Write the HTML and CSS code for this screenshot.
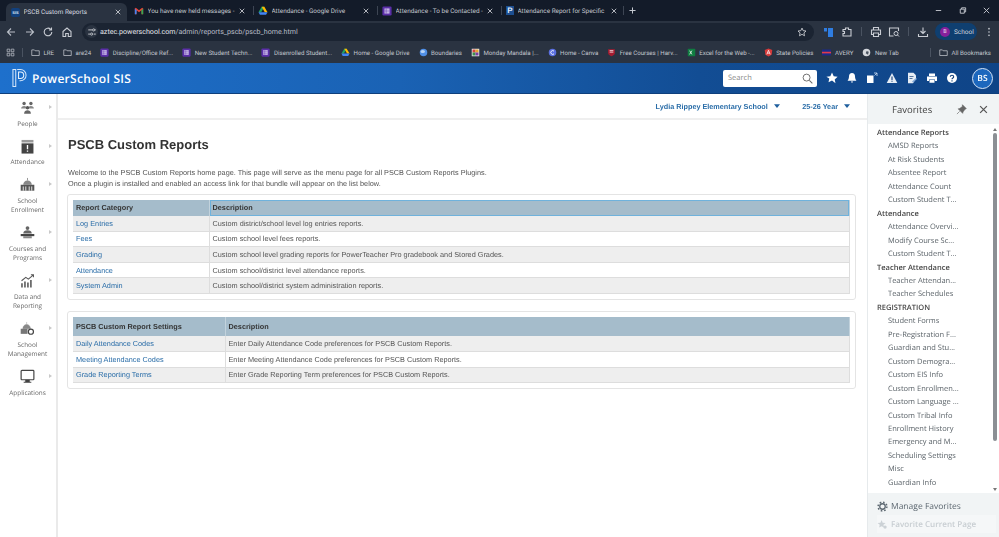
FILE: index.html
```html
<!DOCTYPE html>
<html lang="en">
<head>
<meta charset="utf-8">
<title>PSCB Custom Reports</title>
<link rel="stylesheet" href="styles.css">
</head>
<body>
<svg class="defs" width="0" height="0" aria-hidden="true">
  <symbol id="folder" viewBox="0 0 12 12"><path d="M1 2.5h3.500l1 1.200H11v6.300H1z" fill="none" stroke="currentColor" stroke-width="1"/></symbol>
  <symbol id="sheet" viewBox="0 0 12 12"><rect x="0.500" y="0.500" width="11" height="11" rx="1.500" fill="#5b2fa8"/><rect x="3" y="3" width="6" height="6" fill="#d9cff0"/><path d="M3 5h6M3 7h6M5 3v6" stroke="#5b2fa8" stroke-width=".6"/></symbol>
  <symbol id="drive" viewBox="0 0 12 12"><path d="M4.400 1h3.200l-3.700 6.400H.6z" fill="#1fa463"/><path d="M7.600 1l3.800 6.400H8.100L4.400 1z" fill="#ffba00"/><path d="M.6 7.400h10.800L9.700 10.600H2.300z" fill="#4285f4"/></symbol>
  <symbol id="close" viewBox="0 0 8 8"><path d="M1 1l6 6M7 1L1 7" stroke="currentColor" stroke-width="1.100" fill="none"/></symbol>
  <symbol id="caret" viewBox="0 0 8 5"><path d="M0 0h8L4 5z" fill="currentColor"/></symbol>
</svg>

<div class="tabstrip">
  <div class="tab active"><span class="fav-sis">SIS</span><span class="tab-title">PSCB Custom Reports</span><svg class="tab-x"><use href="#close"/></svg></div>
  <div class="tab"><svg class="fav" viewBox="0 0 12 12"><path d="M1 3v7h2V5.200L6 7.600l3-2.400V10h2V3L9.800 2 6 5 2.200 2z" fill="#ea4335"/><path d="M1 3v7h2V5.200z" fill="#4285f4"/><path d="M11 3v7H9V5.200z" fill="#34a853"/></svg><span class="tab-title">You have new held messages -</span><svg class="tab-x"><use href="#close"/></svg></div>
  <span class="tab-sep"></span>
  <div class="tab"><svg class="fav"><use href="#drive"/></svg><span class="tab-title">Attendance - Google Drive</span><svg class="tab-x"><use href="#close"/></svg></div>
  <span class="tab-sep"></span>
  <div class="tab"><svg class="fav"><use href="#sheet"/></svg><span class="tab-title">Attendance - To be Contacted -</span><svg class="tab-x"><use href="#close"/></svg></div>
  <span class="tab-sep"></span>
  <div class="tab"><span class="fav-p">P</span><span class="tab-title">Attendance Report for Specific</span><svg class="tab-x"><use href="#close"/></svg></div>
  <span class="tab-sep last"></span>
  <svg class="new-tab" viewBox="0 0 8 8"><path d="M4 .5v7M.5 4h7" stroke="#c9cdd4" stroke-width="1.100"/></svg>
  <div class="win-controls">
    <svg viewBox="0 0 10 10"><path d="M2 5h6" stroke="#c9cdd4"/></svg>
    <svg viewBox="0 0 10 10"><path d="M2.500 3.500h4.500v4.500h-4.500zM4 3.500V2h4.500v4.500H7" fill="none" stroke="#c9cdd4"/></svg>
    <svg viewBox="0 0 10 10"><path d="M2 2l6 6M8 2L2 8" stroke="#c9cdd4"/></svg>
  </div>
</div>

<div class="toolbar">
  <svg class="tb-ic" viewBox="0 0 12 12"><path d="M10 6H2.500M6 2.500L2.500 6 6 9.500" fill="none" stroke="#b9bec7" stroke-width="1.100"/></svg>
  <svg class="tb-ic" viewBox="0 0 12 12"><path d="M2 6h7.500M6 2.500L9.500 6 6 9.500" fill="none" stroke="#b9bec7" stroke-width="1.100"/></svg>
  <svg class="tb-ic" viewBox="0 0 12 12"><path d="M9.800 6A3.800 3.800 0 1 1 8.700 3.300M9.500 1.500v2.500H7" fill="none" stroke="#c9cdd4" stroke-width="1.100"/></svg>
  <svg class="tb-ic" viewBox="0 0 12 12"><path d="M2 5.500L6 2l4 3.500V10.500H7.300V7.500H4.700v3H2z" fill="none" stroke="#c9cdd4" stroke-width="1.100"/></svg>
  <div class="omnibox">
    <span class="tune"><svg viewBox="0 0 12 12"><path d="M1.500 3.500h5M1.500 8.500h2M8 8.500h2.500M9.500 3.500h1" stroke="#d2d5da" stroke-width="1.100"/><circle cx="8" cy="3.500" r="1.300" fill="none" stroke="#d2d5da"/><circle cx="5.500" cy="8.500" r="1.300" fill="none" stroke="#d2d5da"/></svg></span>
    <span class="url"><b>aztec.powerschool.com</b>/admin/reports_pscb/pscb_home.html</span>
    <svg class="omni-star" viewBox="0 0 12 12"><path d="M6 1.300l1.400 3.100 3.400.4-2.500 2.300.7 3.400L6 8.800l-3 1.700.7-3.400L1.200 4.800l3.400-.4z" fill="none" stroke="#d2d5da" stroke-width="1"/></svg>
  </div>
  <div class="ext">
    <svg class="tb-ic" viewBox="0 0 12 12"><rect x="1" y="2" width="3" height="3.500" fill="#2f7de1"/><rect x="5" y="2" width="5" height="9" fill="#2f7de1"/></svg>
    <svg class="tb-ic" viewBox="0 0 12 12"><path d="M2 3.500h2.500V2h3v1.500H10V10H2V7.500h1.500v-2H2z" fill="none" stroke="#c9cdd4" stroke-width="1.100"/></svg>
    <span class="tb-sep"></span>
    <svg class="tb-ic" viewBox="0 0 12 12"><path d="M3.500 4V1.500h5V4M3 8.500H1.500V4h9v4.500H9M3.500 7h5v3.500h-5z" fill="none" stroke="#c9cdd4" stroke-width="1.100"/></svg>
    <svg class="tb-ic" viewBox="0 0 12 12"><path d="M10.500 5V2h-9v8h4" fill="none" stroke="#c9cdd4" stroke-width="1.100"/><circle cx="8" cy="7.500" r="2" fill="none" stroke="#c9cdd4"/><path d="M9.500 9l1.500 1.500" stroke="#c9cdd4"/></svg>
    <span class="tb-sep"></span>
    <svg class="tb-ic" viewBox="0 0 12 12"><path d="M6 1.500v6M3.500 5L6 7.500 8.500 5M1.500 8v2.500h9V8" fill="none" stroke="#c9cdd4" stroke-width="1.100"/></svg>
    <div class="profile"><span class="avatar">B</span><span>School</span></div>
    <svg class="kebab" viewBox="0 0 4 12"><circle cx="2" cy="2" r="1" fill="#c9cdd4"/><circle cx="2" cy="6" r="1" fill="#c9cdd4"/><circle cx="2" cy="10" r="1" fill="#c9cdd4"/></svg>
  </div>
</div>

<div class="bookmarks">
  <svg class="bm-apps" viewBox="0 0 12 12"><path d="M1.500 1.500h3.500v3.500H1.500zM7 1.500h3.500v3.500H7zM1.500 7h3.500v3.500H1.500zM7 7h3.500v3.500H7z" fill="none" stroke="#b9bec7"/></svg>
  <span class="bm-sep"></span>
  <div class="bm"><svg class="bm-ic"><use href="#folder"/></svg>LRE</div>
  <div class="bm"><svg class="bm-ic"><use href="#folder"/></svg>are24</div>
  <div class="bm"><svg class="bm-ic"><use href="#sheet"/></svg>Discipline/Office Ref...</div>
  <div class="bm"><svg class="bm-ic"><use href="#sheet"/></svg>New Student Techn...</div>
  <div class="bm"><svg class="bm-ic"><use href="#sheet"/></svg>Disenrolled Student...</div>
  <div class="bm"><svg class="bm-ic"><use href="#drive"/></svg>Home - Google Drive</div>
  <div class="bm"><svg class="bm-ic" viewBox="0 0 12 12"><circle cx="6" cy="6" r="5" fill="#4f8fe6"/><ellipse cx="5" cy="4.500" rx="3" ry="2" fill="#b9d4f5"/></svg>Boundaries</div>
  <div class="bm"><svg class="bm-ic" viewBox="0 0 12 12"><rect x="1" y="1" width="10" height="10" fill="#eee"/><path d="M2 2h4v4H2z" fill="#d6453d"/><path d="M6 2h4v4H6z" fill="#e7a52c"/><path d="M2 6h4v4H2z" fill="#3c8f4f"/><path d="M6 6h4v4H6z" fill="#7a3fa0"/></svg>Monday Mandala |...</div>
  <div class="bm"><svg class="bm-ic" viewBox="0 0 12 12"><circle cx="6" cy="6" r="5" fill="#5a6fe0"/><path d="M8 4.200A2.500 2.500 0 1 0 8 7.800" fill="none" stroke="#fff" stroke-width="1.200"/></svg>Home - Canva</div>
  <div class="bm"><svg class="bm-ic" viewBox="0 0 12 12"><path d="M1.500 1.500h9V7c0 2-2.500 3-4.500 4-2-1-4.500-2-4.500-4z" fill="#a51c30"/><path d="M3.500 3.500h5M3.500 5.500h5" stroke="#fff"/></svg>Free Courses | Harv...</div>
  <div class="bm"><svg class="bm-ic" viewBox="0 0 12 12"><rect x="1" y="1" width="10" height="10" rx="1" fill="#107c41"/><path d="M3.500 3.500l3 5M6.500 3.500l-3 5" stroke="#fff"/></svg>Excel for the Web -...</div>
  <div class="bm"><svg class="bm-ic" viewBox="0 0 12 12"><path d="M6 .8l5 1.800-.8 6.300L6 11.200 1.800 8.900 1 2.600z" fill="#d63a3a"/><path d="M6 3L3.800 8.500M6 3l2.200 5.500M4.600 6.800h2.800" stroke="#fff" fill="none"/></svg>State Policies</div>
  <div class="bm"><svg class="bm-ic" viewBox="0 0 12 12"><rect y="2" width="12" height="8" fill="#1b2a8a"/><rect y="5" width="12" height="2.200" fill="#e23a4a"/></svg>AVERY</div>
  <div class="bm"><svg class="bm-ic" viewBox="0 0 12 12"><circle cx="6" cy="6" r="5" fill="#d4d7dc"/><path d="M3 3l3 1-1 3 3 2 1-4" fill="#4a5361"/></svg>New Tab</div>
  <span class="bm-sep right"></span>
  <div class="bm"><svg class="bm-ic"><use href="#folder"/></svg>All Bookmarks</div>
</div>

<header class="ps-header">
  <svg class="ps-logo" viewBox="0 0 16 20"><path d="M1 1h3v18H1zM5.500 1H9a6 6 0 0 1 0 12H8" fill="none" stroke="#d5e6fa" stroke-width="1.100"/><path d="M7 3.500h2a3.500 3.500 0 0 1 0 7H7z" fill="none" stroke="#eaf3fd" stroke-width="1.100"/></svg>
  <span class="ps-name">PowerSchool SIS</span>
  <div class="ps-tools">
    <div class="ps-search"><span>Search</span><svg viewBox="0 0 12 12"><circle cx="5" cy="5" r="3.800" fill="none" stroke="#666" stroke-width="1"/><path d="M8 8l3.300 3.300" stroke="#666" stroke-width="1.100"/></svg></div>
    <svg class="ps-ic" viewBox="0 0 12 12"><path d="M6 .6l1.700 3.600 3.900.5-2.900 2.700.8 3.900L6 8.400l-3.500 1.900.8-3.900L.4 4.700l3.900-.5z" fill="#fff"/></svg>
    <svg class="ps-ic" viewBox="0 0 12 12"><path d="M6 1c-2 0-3 1.500-3 3.500C3 7 2 8 1.500 8.800h9C10 8 9 7 9 4.500 9 2.500 8 1 6 1zM4.800 9.500h2.400L6 11z" fill="#fff"/></svg>
    <svg class="ps-ic" viewBox="0 0 12 12"><path d="M1 3.500h6.500V11H1z" fill="#fff"/><path d="M8 1h3v3M11 1L8.500 3.500" stroke="#cfe0f4" fill="none" stroke-width=".8"/></svg>
    <svg class="ps-ic" viewBox="0 0 12 12"><path d="M6 1l5.300 10H.7z" fill="#e6edf5"/><path d="M6 4.500v3.500M6 8.800v1" stroke="#123f78" stroke-width="1.100"/></svg>
    <svg class="ps-ic" viewBox="0 0 12 12"><path d="M2 .8h5.500L10 3.300V7L7 11.200H2z" fill="#e6edf5"/><path d="M3.500 4.500h4M3.500 6.500h3" stroke="#123f78" stroke-width=".7"/><path d="M6.500 10l4-3.500" stroke="#7fa6d6" stroke-width="1.400"/></svg>
    <svg class="ps-ic" viewBox="0 0 12 12"><path d="M3 1.500h6V4H3zM1 4.500h10v4.500H9V7.500H3V9H1zM3.500 8h5v2.800h-5z" fill="#fff"/></svg>
    <svg class="ps-ic" viewBox="0 0 12 12"><circle cx="6" cy="6" r="5" fill="#fff"/><path d="M4.300 4.700C4.300 2.800 7.700 2.800 7.700 4.700 7.700 6 6 6 6 7.300M6 8.300v1.200" fill="none" stroke="#123f78" stroke-width="1.100"/></svg>
    <div class="ps-user">BS</div>
  </div>
</header>

<div class="app">
  <nav class="side">
    <a class="nav-item">
      <svg class="nav-ic" viewBox="0 0 20 18"><circle cx="6" cy="4" r="2" fill="#666"/><circle cx="14" cy="4" r="2" fill="#666"/><path d="M2.500 10c0-2 1.500-3 3.500-3s3.500 1 3.500 3zM10.500 10c0-2 1.500-3 3.500-3s3.500 1 3.500 3z" fill="#888"/><circle cx="10" cy="9" r="2" fill="#555"/><path d="M6 16c0-3 2-4 4-4s4 1 4 4z" fill="#666"/></svg>
      <span class="nav-label">People</span><i class="nav-arrow"></i>
    </a>
    <a class="nav-item">
      <svg class="nav-ic" viewBox="0 0 20 18"><rect x="3" y="1" width="14" height="3" fill="#999"/><rect x="3" y="5" width="14" height="12" fill="#444"/><path d="M10 7v5M10 13.500v1.500" stroke="#fff" stroke-width="1.600"/></svg>
      <span class="nav-label">Attendance</span><i class="nav-arrow"></i>
    </a>
    <a class="nav-item">
      <svg class="nav-ic" viewBox="0 0 20 18"><path d="M10 1v3" stroke="#888"/><path d="M5 9c0-3 2-5 5-5s5 2 5 5z" fill="#888"/><rect x="2" y="9" width="16" height="7" fill="#555"/><path d="M5 11v5M8 11v5M12 11v5M15 11v5" stroke="#fff" stroke-width="1"/></svg>
      <span class="nav-label">School<br>Enrollment</span><i class="nav-arrow"></i>
    </a>
    <a class="nav-item">
      <svg class="nav-ic" viewBox="0 0 20 18"><circle cx="10" cy="3.500" r="2.200" fill="#666"/><path d="M5 10c0-3 2-4 5-4s5 1 5 4z" fill="#666"/><rect x="2" y="10.500" width="16" height="2.500" fill="#444"/><path d="M5 13h10v2.500H5z" fill="#888"/></svg>
      <span class="nav-label">Courses and<br>Programs</span><i class="nav-arrow"></i>
    </a>
    <a class="nav-item">
      <svg class="nav-ic" viewBox="0 0 20 18"><path d="M3 9l5-4 3 2 6-5M14 2h3v3" fill="none" stroke="#555" stroke-width="1.200"/><path d="M3.500 12v5M7 10v7M10.500 11v6M14 8v9" stroke="#666" stroke-width="2"/></svg>
      <span class="nav-label">Data and<br>Reporting</span><i class="nav-arrow"></i>
    </a>
    <a class="nav-item">
      <svg class="nav-ic" viewBox="0 0 20 18"><path d="M9 1v3M4.500 9c0-3 2-5 4.500-5s4.500 2 4.500 5z" fill="#888" stroke="#888" stroke-width=".5"/><rect x="2" y="9" width="8" height="6" fill="#777"/><circle cx="14" cy="12.500" r="3" fill="#fff" stroke="#444" stroke-width="1.400"/></svg>
      <span class="nav-label">School<br>Management</span><i class="nav-arrow"></i>
    </a>
    <a class="nav-item">
      <svg class="nav-ic" viewBox="0 0 20 18"><rect x="2.500" y="1.500" width="15" height="11" rx="1" fill="none" stroke="#444" stroke-width="1.400"/><path d="M8 13h4v2H8zM5.500 15.500h9" stroke="#444" stroke-width="1.200"/></svg>
      <span class="nav-label">Applications</span><i class="nav-arrow"></i>
    </a>
  </nav>

  <div class="center">
    <div class="context">
      <span class="ctx-school">Lydia Rippey Elementary School</span><svg class="ctx-caret"><use href="#caret"/></svg>
      <span class="ctx-year">25-26 Year</span><svg class="ctx-caret"><use href="#caret"/></svg>
    </div>
    <main class="content">
      <h1>PSCB Custom Reports</h1>
      <p class="intro">Welcome to the PSCB Custom Reports home page. This page will serve as the menu page for all PSCB Custom Reports Plugins.<br>Once a plugin is installed and enabled an access link for that bundle will appear on the list below.</p>
      <section class="box">
        <table class="grid cat">
          <thead><tr><th>Report Category</th><th class="focus">Description</th></tr></thead>
          <tbody>
            <tr><td><a>Log Entries</a></td><td>Custom district/school level log entries reports.</td></tr>
            <tr><td><a>Fees</a></td><td>Custom school level fees reports.</td></tr>
            <tr><td><a>Grading</a></td><td>Custom school level grading reports for PowerTeacher Pro gradebook and Stored Grades.</td></tr>
            <tr><td><a>Attendance</a></td><td>Custom school/district level attendance reports.</td></tr>
            <tr><td><a>System Admin</a></td><td>Custom school/district system administration reports.</td></tr>
          </tbody>
        </table>
      </section>
      <section class="box">
        <table class="grid set">
          <thead><tr><th>PSCB Custom Report Settings</th><th>Description</th></tr></thead>
          <tbody>
            <tr><td><a>Daily Attendance Codes</a></td><td>Enter Daily Attendance Code preferences for PSCB Custom Reports.</td></tr>
            <tr><td><a>Meeting Attendance Codes</a></td><td>Enter Meeting Attendance Code preferences for PSCB Custom Reports.</td></tr>
            <tr><td><a>Grade Reporting Terms</a></td><td>Enter Grade Reporting Term preferences for PSCB Custom Reports.</td></tr>
          </tbody>
        </table>
      </section>
    </main>
  </div>

  <aside class="fav-panel">
    <div class="fav-head">
      <span class="fav-title">Favorites</span>
      <svg class="fav-pin" viewBox="0 0 12 12"><path d="M7 .8l4.200 4.200-1.300.6-2.300 3-.3 1.600L2.400 5.300 4 5l3-2.300zM4 8L1 11" fill="#666" stroke="#666" stroke-width=".7"/></svg>
      <svg class="fav-x"><use href="#close"/></svg>
    </div>
    <div class="fav-body">
      <ul class="fav-list">
        <li class="g">Attendance Reports</li>
        <li>AMSD Reports</li><li>At Risk Students</li><li>Absentee Report</li><li>Attendance Count</li><li>Custom Student T...</li>
        <li class="g">Attendance</li>
        <li>Attendance Overvi...</li><li>Modify Course Sc...</li><li>Custom Student T...</li>
        <li class="g">Teacher Attendance</li>
        <li>Teacher Attendan...</li><li>Teacher Schedules</li>
        <li class="g">REGISTRATION</li>
        <li>Student Forms</li><li>Pre-Registration F...</li><li>Guardian and Stu...</li><li>Custom Demogra...</li><li>Custom EIS Info</li><li>Custom Enrollmen...</li><li>Custom Language ...</li><li>Custom Tribal Info</li><li>Enrollment History</li><li>Emergency and M...</li><li>Scheduling Settings</li><li>Misc</li><li>Guardian Info</li>
      </ul>
      <div class="scroll"><i class="up"></i><span class="thumb"></span><i class="down"></i></div>
    </div>
    <div class="fav-foot">
      <div class="manage"><svg viewBox="0 0 12 12"><circle cx="6" cy="6" r="3" fill="none" stroke="#5c6770" stroke-width="1.400"/><circle cx="6" cy="6" r="4.800" fill="none" stroke="#5c6770" stroke-width="1.600" stroke-dasharray="1.800 1.970"/></svg>Manage Favorites</div>
      <div class="fav-current"><svg viewBox="0 0 12 12"><path d="M5 1l1.200 3 3.200.3-2.400 2 .7 3L5 7.800 2.300 9.300l.7-3-2.400-2 3.200-.3z" fill="#ccd2d6"/><circle cx="8.800" cy="8.800" r="1.800" fill="#ccd2d6"/></svg>Favorite Current Page</div>
    </div>
  </aside>
</div>
</body>
</html>
```
FILE: styles.css
```css
* { box-sizing: border-box; }
html, body { margin: 0; height: 100%; }
body {
  width: 999px; height: 537px; overflow: hidden;
  display: flex; flex-direction: column;
  font-family: "Liberation Sans", Arial, sans-serif;
  background: #fff;
  text-rendering: geometricPrecision;
  filter: blur(.3px);
}
.defs { position: absolute; }

/* browser chrome */
.tabstrip {
  height: 21px; flex: none; background: #131b29;
  display: flex; align-items: center; padding-left: 6px;
  color: #c3c7ce; font: 6.400px Roboto, sans-serif;
}
.tab { width: 124px; height: 21px; display: flex; align-items: center; padding: 0 8px 0 5px; flex: none; }
.tab.active { width: 121px; background: #2a3341; border-radius: 6px 6px 0 0; margin-right: 2px; color: #d8dbe0; height: 18px; margin-top: 3px; padding-right: 6px; }
.tab-title { flex: 1; white-space: nowrap; overflow: hidden; margin-left: 3.500px; }
.tab-x { width: 6px; height: 6px; color: #d3d6db; flex: none; }
.fav { width: 10px; height: 10px; flex: none; }
.fav-sis { width: 9px; height: 9px; border-radius: 2px; background: #12407c; color: #d9e6f6; font: 700 4px "Liberation Sans", sans-serif; display: flex; align-items: center; justify-content: center; flex: none; }
.fav-p { width: 8px; height: 9px; background: #1d4f91; color: #dce9f8; font: 700 8px/9px "Liberation Sans", sans-serif; text-align: center; flex: none; }
.tab-sep { width: 1px; height: 9px; background: #3d4553; flex: none; margin: 0 -1px 0 0; }
.tab-sep.last { margin-left: -2px; }
.new-tab { width: 7px; height: 7px; margin-left: 6px; flex: none; }
.win-controls { margin-left: auto; display: flex; gap: 15px; padding-right: 8px; }
.win-controls svg { width: 9px; height: 9px; }

.toolbar {
  height: 21px; flex: none; background: #2a3341;
  display: flex; align-items: center; padding-left: 5px; gap: 6.500px;
}
.tb-ic { width: 12px; height: 12px; flex: none; }
.omnibox {
  width: 732px; height: 18px; margin-left: 3px; border-radius: 9px; background: #1b2432;
  display: flex; align-items: center; padding-left: 3px; color: #b9bec7;
  font: 7.100px Roboto, sans-serif;
}
.omnibox b { font-weight: 400; color: #e6e8ec; }
.tune { width: 13px; height: 13px; border-radius: 50%; background: #2a3341; display: flex; align-items: center; justify-content: center; flex: none; }
.tune svg { width: 10px; height: 10px; }
.url { margin-left: 2px; flex: 1; }
.omni-star { width: 10px; height: 10px; margin-right: 7px; }
.ext { display: flex; align-items: center; gap: 6px; margin-left: 2.500px; flex: 1; }
.tb-sep { width: 1px; height: 9px; background: #4a5361; margin: 0 2px; }
.profile { width: 42px; height: 17px; border-radius: 9px; background: #0f3f70; display: flex; align-items: center; gap: 4px; padding-left: 5px; font: 6.500px Roboto, sans-serif; color: #cfd6de; flex: none; }
.avatar { width: 10px; height: 10px; border-radius: 50%; background: #86209b; color: #e8d7ee; font-size: 5.500px; display: flex; align-items: center; justify-content: center; }
.kebab { width: 4px; height: 10px; margin-left: 4px; flex: none; }

.bookmarks {
  height: 21px; flex: none; background: #2a3341; color: #c3c7ce;
  display: flex; align-items: center; padding-left: 6px; gap: 9px;
  font: 6.150px Roboto, sans-serif; white-space: nowrap;
}
.bm-apps { width: 9px; height: 9px; flex: none; margin-right: -2px; }
.bm-sep { width: 1px; height: 9px; background: #4a5361; flex: none; margin-right: -1px; }
.bm-sep.right { margin-left: auto; }
.bm { display: flex; align-items: center; gap: 3.500px; flex: none; }
.bm:last-child { margin-right: 8px; }
.bm-ic { width: 9px; height: 9px; color: #c3c7ce; flex: none; }

.ps-header {
  height: 31px; flex: none; display: flex; align-items: center; padding-left: 12px;
  background: linear-gradient(90deg, #1e70cc 0%, #1a62b4 40%, #124d94 70%, #0f4487 100%);
  border-bottom: 1px solid #0e3f7c;
}
.ps-logo { width: 15px; height: 20px; flex: none; }
.ps-name { margin-left: 5px; color: #fff; font: 600 12px "Open Sans", sans-serif; letter-spacing: .3px; padding-top: 1px; }
.ps-tools { margin-left: auto; display: flex; align-items: center; gap: 8px; padding-right: 6px; }
.ps-search { width: 94px; height: 17px; background: #fff; border-radius: 2px; display: flex; align-items: center; justify-content: space-between; padding: 0 4px 0 5px; color: #888; font: 7.500px "Open Sans", sans-serif; margin-right: 1px; }
.ps-search svg { width: 11px; height: 11px; }
.ps-ic { width: 12px; height: 12px; flex: none; }
.ps-user { width: 21px; height: 21px; border-radius: 50%; border: 1px solid #d7e5f6; background: #1c67bd; color: #fff; font: 600 8.500px/19px "Open Sans", sans-serif; text-align: center; margin-left: 6px; }

/* app */
.app { flex: 1; display: flex; min-height: 0; }
.side {
  width: 58px; flex: none; border-right: 2px solid #eaeaea; background: #fff;
  display: flex; flex-direction: column; gap: 9.500px; padding-top: 5px;
}
.nav-item { position: relative; display: flex; flex-direction: column; align-items: center; gap: 1.500px; padding-right: 1px; }
.nav-ic { width: 17px; height: 15.500px; margin: 1.250px 0; }
.nav-label { font: 6.400px/9.500px "Open Sans", sans-serif; color: #666; text-align: center; white-space: nowrap; }
.nav-arrow { position: absolute; right: 4px; top: 6px; border-left: 3px solid #c9c9c9; border-top: 2.500px solid transparent; border-bottom: 2.500px solid transparent; }

.center { flex: 1; min-width: 0; display: flex; flex-direction: column; }
.context {
  height: 26px; flex: none; border-bottom: 2px solid #efefef;
  display: flex; align-items: center; justify-content: flex-end; padding: 0 17px 0 0;
  font: 700 7.250px "Liberation Sans", sans-serif; color: #2a6da8;
}
.ctx-caret { width: 6px; height: 4px; margin-left: 6px; color: #1f5f9e; }
.ctx-year { margin-left: 22.500px; }
.content { padding: 16px 11px 0 9px; }
h1 { margin: 0 0 0 1px; font: 700 13px/17px "Liberation Sans", sans-serif; color: #333; }
.intro { margin: 13.500px 0 5px 1px; font: 7.300px/11px "Liberation Sans", sans-serif; color: #555; }
.box { border: 1px solid #e4e4e4; border-radius: 3px; padding: 5px; margin-bottom: 11px; }
.grid { width: 100%; border-collapse: collapse; table-layout: fixed; font: 7.300px "Liberation Sans", sans-serif; color: #555; }
.grid th { background: #a5bccb; color: #333; font-weight: 700; text-align: left; padding: 0 3px; border-right: 1px solid #c2d2dc; height: 16px; }
.grid td { height: 15.600px; padding: 0 3px; border-bottom: 1px solid #ddd; border-right: 1px solid #ddd; }
.grid tbody tr:nth-child(odd) td { background: #eeeeee; }
.grid a { color: #2a6da8; }
.grid th.focus { box-shadow: inset 0 0 0 1px #6fb2dc; }
.cat th:first-child, .cat td:first-child { width: 136px; }
.set th:first-child, .set td:first-child { width: 152px; }
.set th { height: 19px; }

.fav-panel { width: 132px; flex: none; display: flex; flex-direction: column; border-left: 1px solid #e6eaec; }
.fav-head { height: 30px; flex: none; background: #f1f4f5; display: flex; align-items: center; padding-left: 24px; }
.fav-title { font: 9.500px "Open Sans", sans-serif; color: #444; width: 64px; flex: none; }
.fav-pin { width: 11px; height: 11px; flex: none; }
.fav-x { width: 9px; height: 9px; margin-left: 11.500px; color: #555; flex: none; }
.fav-body { flex: 1; min-height: 0; display: flex; position: relative; }
.fav-list { list-style: none; margin: 0; padding: 3px 0 0 9px; flex: 1; font: 7.500px/13.450px "Open Sans", sans-serif; color: #5a6268; white-space: nowrap; }
.fav-list li { padding-left: 11px; }
.fav-list li.g { padding-left: 0; color: #444; font-weight: 600; }
.scroll { width: 7px; flex: none; margin-right: 1px; display: flex; flex-direction: column; align-items: center; padding: 4px 0 2px; }
.thumb { width: 4px; height: 308px; background: #8b8f94; border-radius: 2px; margin-top: 2px; }
.up { border-bottom: 3px solid #777; border-left: 2px solid transparent; border-right: 2px solid transparent; }
.down { margin-top: auto; border-top: 3px solid #777; border-left: 2px solid transparent; border-right: 2px solid transparent; }
.fav-foot { height: 44px; flex: none; background: #f1f4f5; padding: 5px 3px 0 9px; }
.manage, .fav-current { display: flex; align-items: center; gap: 3px; font: 8.500px "Open Sans", sans-serif; height: 16px; white-space: nowrap; }
.manage { color: #5c6770; margin-bottom: 1px; }
.fav-current { color: #c8ced2; background: #f5f7f8; height: 18px; font-weight: 600; font-size: 8.100px; }
.manage svg, .fav-current svg { width: 11px; height: 11px; flex: none; }
```
